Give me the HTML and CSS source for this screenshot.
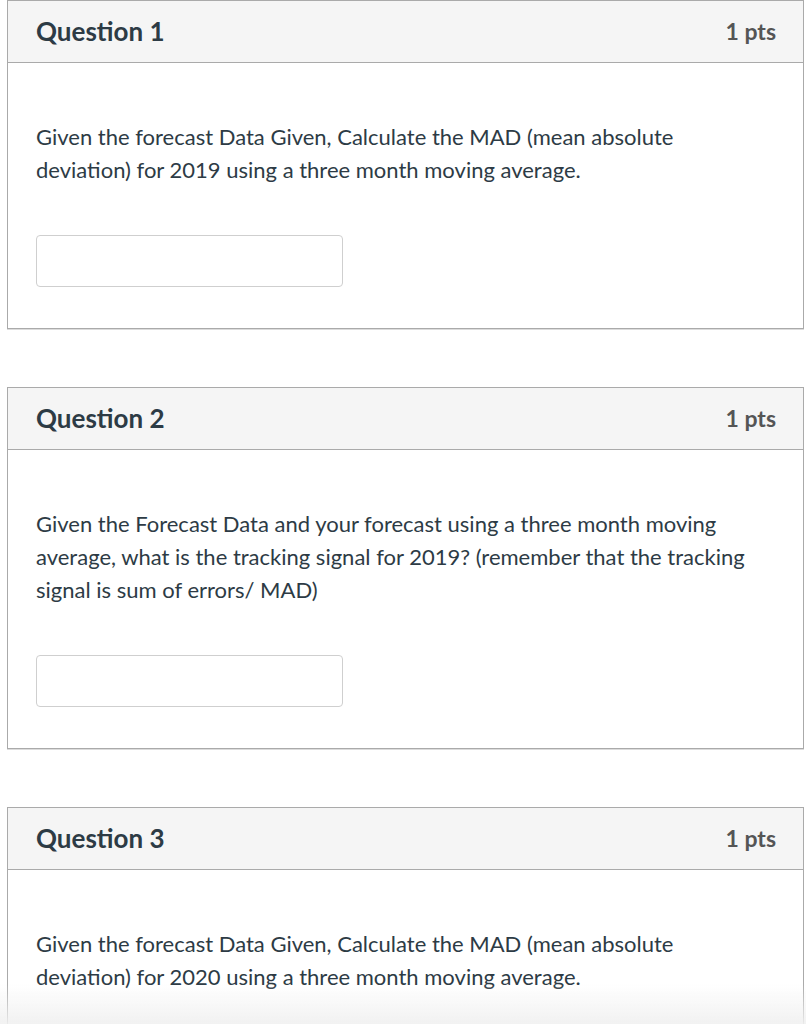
FILE: index.html
```html
<!DOCTYPE html>
<html>
<head>
<meta charset="utf-8">
<link rel="stylesheet" href="styles.css">
</head>
<body>
<div class="page">
  <div class="card">
    <div class="card-header">
      <h2 class="q-title">Question 1</h2>
      <span class="q-pts">1 pts</span>
    </div>
    <div class="card-body">
      <p class="q-text">Given the forecast Data Given, Calculate the MAD (mean absolute deviation) for 2019 using a three month moving average.</p>
      <input class="answer" type="text">
    </div>
  </div>

  <div class="card">
    <div class="card-header">
      <h2 class="q-title">Question 2</h2>
      <span class="q-pts">1 pts</span>
    </div>
    <div class="card-body">
      <p class="q-text">Given the Forecast Data and your forecast using a three month moving average, what is the tracking signal for 2019? (remember that the tracking signal is sum of errors/ MAD)</p>
      <input class="answer" type="text">
    </div>
  </div>

  <div class="card">
    <div class="card-header">
      <h2 class="q-title">Question 3</h2>
      <span class="q-pts">1 pts</span>
    </div>
    <div class="card-body">
      <p class="q-text">Given the forecast Data Given, Calculate the MAD (mean absolute deviation) for 2020 using a three month moving average.</p>
      <input class="answer" type="text">
    </div>
  </div>
</div>
<div class="fade"></div>
</body>
</html>
```
FILE: styles.css
```css
html, body {
  margin: 0;
  padding: 0;
  background: #fff;
}
body {
  font-family: Lato, "Open Sans", sans-serif;
  color: #2d3b45;
}
.page {
  display: flex;
  flex-direction: column;
  gap: 58.5px;
  padding-left: 7px;
  width: 797px;
}
.card {
  border: 1px solid #aaaaaa;
  box-shadow: 0 1px 0 #dcdcdc;
  background: #fff;
}
.card-header {
  display: flex;
  align-items: center;
  justify-content: space-between;
  padding: 0 27px 1px 28px;
  box-sizing: border-box;
  height: 62px;
  background: #f5f5f5;
  border-bottom: 1px solid #aaaaaa;
}
.q-title {
  margin: 0;
  font-size: 26px;
  font-weight: 700;
  color: #2d3b45;
}
.q-pts {
  font-size: 23px;
  font-weight: 700;
  color: #555;
}
.card-body {
  padding: 57px 28px 41px;
}
.q-text {
  margin: 0 0 48.5px;
  padding-right: 14px;
  font-size: 22px;
  line-height: 33px;
}
.answer {
  display: block;
  box-sizing: border-box;
  width: 307px;
  height: 52px;
  margin: 0;
  border: 1px solid #cfcfcf;
  border-radius: 4px;
  background: #fff;
  font-family: inherit;
  font-size: 16px;
  padding: 0 10px;
}
.fade {
  position: fixed;
  left: 0;
  right: 0;
  bottom: 0;
  height: 40px;
  background: linear-gradient(to bottom, rgba(240,240,240,0), rgba(240,240,240,0.9));
  pointer-events: none;
}
```
